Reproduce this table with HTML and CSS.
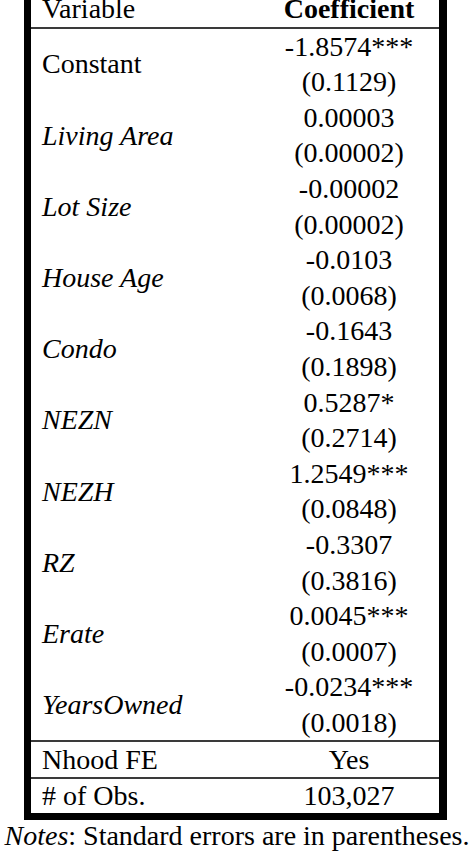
FILE: index.html
```html
<!DOCTYPE html>
<html>
<head>
<meta charset="utf-8">
<link rel="stylesheet" href="styles.css">
</head>
<body>
<div class="wrap">
<table class="reg">
  <thead>
    <tr><th class="var">Variable</th><th class="coef">Coefficient</th></tr>
  </thead>
  <tbody>
    <tr><td class="var">Constant</td><td class="val">-1.8574***<br>(0.1129)</td></tr>
    <tr><td class="var it">Living Area</td><td class="val">0.00003<br>(0.00002)</td></tr>
    <tr><td class="var it">Lot Size</td><td class="val">-0.00002<br>(0.00002)</td></tr>
    <tr><td class="var it">House Age</td><td class="val">-0.0103<br>(0.0068)</td></tr>
    <tr><td class="var it">Condo</td><td class="val">-0.1643<br>(0.1898)</td></tr>
    <tr><td class="var it">NEZN</td><td class="val">0.5287*<br>(0.2714)</td></tr>
    <tr><td class="var it">NEZH</td><td class="val">1.2549***<br>(0.0848)</td></tr>
    <tr><td class="var it">RZ</td><td class="val">-0.3307<br>(0.3816)</td></tr>
    <tr><td class="var it">Erate</td><td class="val">0.0045***<br>(0.0007)</td></tr>
    <tr><td class="var it">YearsOwned</td><td class="val">-0.0234***<br>(0.0018)</td></tr>
    <tr class="sep"><td class="var">Nhood FE</td><td class="val">Yes</td></tr>
    <tr class="sep last"><td class="var"># of Obs.</td><td class="val">103,027</td></tr>
  </tbody>
</table>
</div>
<p class="notes"><em>Notes</em>: Standard errors are in parentheses.</p>
</body>
</html>
```
FILE: styles.css
```css
html, body {
  margin: 0;
  padding: 0;
  background: #ffffff;
}
body {
  width: 474px;
  height: 853px;
  overflow: hidden;
  font-family: "Liberation Serif", "Times New Roman", serif;
  font-size: 28px;
  color: #000;
}
.wrap {
  padding-left: 24px;
  margin-top: -16px;
}
.reg {
  border-collapse: separate;
  border-spacing: 0;
  width: 423px;
  border-style: solid;
  border-color: #000;
  border-width: 7px 8px 7px 7px;
  line-height: 35.6px;
}
.reg th, .reg td {
  padding: 0;
  font-weight: normal;
}
.reg th.var, .reg td.var {
  width: 217px;
  padding-left: 11px;
  text-align: left;
  vertical-align: middle;
}
.reg th.coef {
  font-weight: bold;
  text-align: center;
}
.reg thead th {
  border-bottom: 2px solid #3a3a3a;
}
.reg td.val {
  text-align: center;
}
.it {
  font-style: italic;
}
.reg tr.sep td {
  border-top: 2px solid #3a3a3a;
  line-height: 35px;
}
.reg tr.last td {
  line-height: 34px;
}
.notes {
  margin: 0;
  text-align: center;
  white-space: nowrap;
  line-height: 31px;
}
```
